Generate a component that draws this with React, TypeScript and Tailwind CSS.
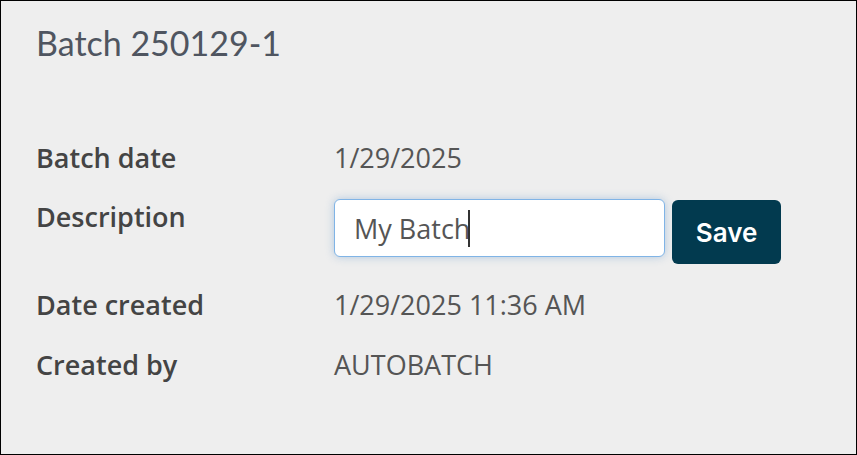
import React, { useState } from 'react';

const App: React.FC = () => {
  const [description, setDescription] = useState<string>('My Batch');

  return (
    <div className="w-[857px] h-[455px] bg-[#eeeeee] border border-black px-[35px] pt-[21px] font-['Open_Sans',sans-serif]">
      <h1 className="text-[34px] leading-[41px] text-[#4f5560] font-['Lato',sans-serif]">
        Batch 250129-1
      </h1>

      <div className="mt-[76px] grid grid-cols-[298px_1fr] gap-y-[22px] text-[27px] leading-[37px]">
        <div className="font-semibold text-[#444444]">Batch date</div>
        <div className="text-[#555555]">1/29/2025</div>

        <div className="font-semibold text-[#444444]">Description</div>
        <div className="flex items-start gap-[7px]">
          <div className="relative mt-[1px]">
            <input
              type="text"
              value={description}
              onChange={e => setDescription(e.target.value)}
              className="block w-[331px] h-[58px] rounded-md border border-[#80b4e6] bg-white px-[19px] text-[27px] text-[#555555] outline-none shadow-[0_0_8px_rgba(102,153,204,0.45)] caret-transparent"
            />
            <span className="absolute left-[134px] top-[11px] h-[37px] w-[2px] bg-[#333333]" />
          </div>
          <button className="mt-[2px] w-[109px] h-[64px] rounded-md bg-[#023a4f] text-white text-[26px] font-semibold font-['Inter',sans-serif]">
            Save
          </button>
        </div>

        <div className="font-semibold text-[#444444]">Date created</div>
        <div className="text-[#555555]">1/29/2025 11:36 AM</div>

        <div className="mt-[1px] font-semibold text-[#444444]">Created by</div>
        <div className="mt-[1px] text-[#555555]">AUTOBATCH</div>
      </div>
    </div>
  );
};

export default App;
